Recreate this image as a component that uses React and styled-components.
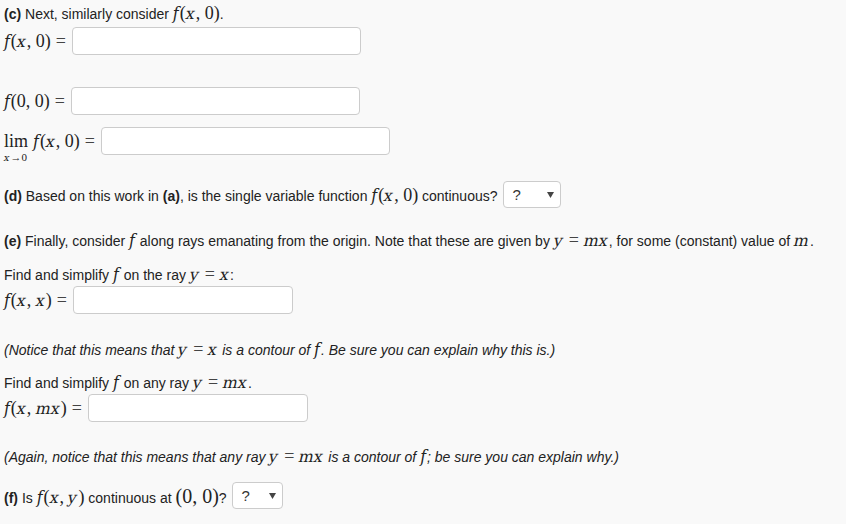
import React from 'react'
import styled, { createGlobalStyle } from 'styled-components'

const GlobalStyle = createGlobalStyle`
  html, body {
    margin: 0;
    padding: 0;
    background: #ffffff;
  }
  body {
    font-family: "Liberation Sans", Arial, sans-serif;
    font-size: 14px;
    color: #222;
  }
`

const Page = styled.div`
  width: 846px;
  min-height: 524px;
  background: #f9f9f9;
  padding: 4px 0 0 4px;
  box-sizing: border-box;
`

const Line = styled.div`
  height: 20px;
  line-height: 20px;
  margin-top: ${({ mt }) => mt || 0}px;
  white-space: nowrap;
  font-style: ${({ italic }) => (italic ? 'italic' : 'normal')};
`

const Row = styled.div`
  display: flex;
  align-items: center;
  height: ${({ h }) => h || 28}px;
  margin-top: ${({ mt }) => mt || 0}px;
  white-space: nowrap;
`

const LimRow = styled(Row)`
  align-items: flex-start;
`

const Math = styled.span`
  font-family: "Liberation Serif", "Times New Roman", serif;
  font-size: ${({ size }) => size || 18}px;
  font-style: normal;
  line-height: 1;
`

// variables: slanted serif letters; the function letter f keeps its italic form
const V = styled.span`
  display: inline-block;
  font-family: "DejaVu Serif", serif;
  font-size: 0.88em;
  font-style: ${({ fn }) => (fn ? 'italic' : 'normal')};
  transform: ${({ fn }) => (fn ? 'none' : 'skewX(-13deg)')};
  padding-right: 1px;
`

const Eq = styled.span`
  padding: 0 5px;
  color: #444;
`

const Answer = styled.div`
  width: ${({ w }) => w}px;
  height: 28px;
  box-sizing: border-box;
  margin-left: ${({ ml }) => ml || 4}px;
  background: #fff;
  border: 1px solid #cccccc;
  border-radius: 4px;
`

const LimStack = styled.span`
  display: inline-flex;
  flex-direction: column;
  align-items: flex-start;
  margin-top: 6px;
  margin-right: 5px;
`

const LimWord = styled.span`
  line-height: 17px;
`

const LimSub = styled.span`
  font-size: 11px;
  line-height: 11px;
  margin-top: 2px;
`

const LimExpr = styled.span`
  margin-top: 6px;
  line-height: 17px;
`

const Select = styled.div`
  display: inline-flex;
  align-items: center;
  justify-content: space-between;
  width: ${({ w }) => w}px;
  height: 27px;
  box-sizing: border-box;
  margin-left: 5px;
  padding: 0 6px 0 9px;
  background: #fff;
  border: 1px solid #cccccc;
  border-radius: 4px;
  font-size: 15px;
  color: #333;
`

const Caret = styled.svg`
  width: 7px;
  height: 6px;
`

const Drop = ({ w }) => (
  <Select w={w}>
    <span>?</span>
    <Caret viewBox="0 0 7 6">
      <path d="M0 0 H7 L3.5 6 Z" fill="#444" />
    </Caret>
  </Select>
)

const Fn = () => <V fn>f</V>

const F = ({ args }) => (
  <Math>
    <Fn />(
    {args.map((a, i) => (
      <React.Fragment key={i}>
        {i > 0 && ', '}
        {/\d/.test(a) ? a : <V>{a}</V>}
      </React.Fragment>
    ))}
    )
  </Math>
)

const Label = ({ args }) => (
  <>
    <F args={args} />
    <Math>
      <Eq>=</Eq>
    </Math>
  </>
)

const Rel = ({ left, right }) => (
  <Math>
    <V>{left}</V>
    <Eq>=</Eq>
    <V>{right}</V>
  </Math>
)

const JustF = () => (
  <Math>
    <Fn />
  </Math>
)

const App = () => {
  return (
    <>
      <GlobalStyle />
      <Page>
        <Line>
          <b>(c)</b> Next, similarly consider <F args={['x', '0']} />.
        </Line>
        <Row mt={3}>
          <Label args={['x', '0']} />
          <Answer w={289} ml={1} />
        </Row>
        <Row mt={32}>
          <Label args={['0', '0']} />
          <Answer w={289} ml={1} />
        </Row>
        <LimRow mt={12}>
          <Math as={LimStack}>
            <LimWord>lim</LimWord>
            <LimSub>
              <V>x</V>→0
            </LimSub>
          </Math>
          <Math as={LimExpr}>
            <Fn />(<V>x</V>, 0)<Eq>=</Eq>
          </Math>
          <Answer w={289} ml={1} />
        </LimRow>
        <Row mt={26} h={27}>
          <span>
            <b>(d)</b> Based on this work in <b>(a)</b>, is the single variable function{' '}
            <F args={['x', '0']} /> continuous?
          </span>
          <Drop w={58} />
        </Row>
        <Line mt={23}>
          <b>(e)</b> Finally, consider <JustF /> along rays emanating from the origin. Note that
          these are given by <Rel left="y" right="mx" />, for some (constant) value of{' '}
          <Math>
            <V>m</V>
          </Math>
          .
        </Line>
        <Line mt={14}>
          Find and simplify <JustF /> on the ray <Rel left="y" right="x" />:
        </Line>
        <Row mt={1}>
          <Label args={['x', 'x']} />
          <Answer w={220} ml={1} />
        </Row>
        <Line mt={26} italic>
          (Notice that this means that <Rel left="y" right="x" /> is a contour of <JustF />. Be
          sure you can explain why this is.)
        </Line>
        <Line mt={13}>
          Find and simplify <JustF /> on any ray <Rel left="y" right="mx" />.
        </Line>
        <Row mt={1}>
          <Label args={['x', 'mx']} />
          <Answer w={220} ml={1} />
        </Row>
        <Line mt={25} italic>
          (Again, notice that this means that any ray <Rel left="y" right="mx" /> is a contour
          of <JustF />; be sure you can explain why.)
        </Line>
        <Row mt={15} h={27}>
          <span>
            <b>(f)</b> Is <F args={['x', 'y']} /> continuous at <Math size={20}>(0, 0)</Math>?
          </span>
          <Drop w={51} />
        </Row>
      </Page>
    </>
  )
}

export default App
